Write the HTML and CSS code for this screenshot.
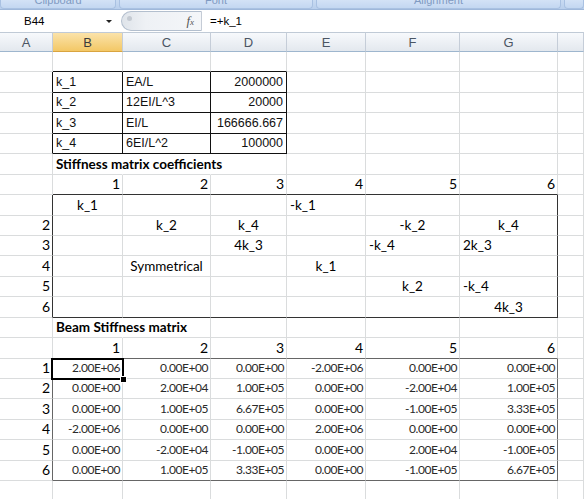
FILE: index.html
```html
<!DOCTYPE html>
<html lang="en">
<head>
    <meta charset="UTF-8">
    <title>Beam Stiffness matrix</title>
    <link rel="stylesheet" href="styles.css">
</head>
<body>
    <div class="ribbon">
        <div class="group g-clip"><span>Clipboard</span></div>
        <div class="group g-font"><span>Font</span></div>
        <div class="group g-align"><span>Alignment</span></div>
        <div class="group g-rest"></div>
    </div>

    <div class="formula-bar">
        <div class="name-box"><span>B44</span><span class="arrow"></span></div>
        <div class="fx-box"><span class="knob"></span><span class="fx">f<small>x</small></span></div>
        <div class="formula">=+k_1</div>
    </div>

    <div class="sheet">
        <!-- column headers -->
        <div class="hd">A</div><div class="hd active">B</div><div class="hd">C</div><div class="hd">D</div>
        <div class="hd">E</div><div class="hd">F</div><div class="hd">G</div><div class="hd"></div>

        <!-- row 0 -->
        <div class="c"></div><div class="c bb"></div><div class="c bb"></div><div class="c bb"></div>
        <div class="c"></div><div class="c"></div><div class="c"></div><div class="c"></div>

        <!-- constants -->
        <div class="c br"></div><div class="c k br bb">k_1</div><div class="c k br bb">EA/L</div><div class="c k r br bb">2000000</div>
        <div class="c"></div><div class="c"></div><div class="c"></div><div class="c"></div>

        <div class="c br"></div><div class="c k br bb">k_2</div><div class="c k br bb">12EI/L^3</div><div class="c k r br bb">20000</div>
        <div class="c"></div><div class="c"></div><div class="c"></div><div class="c"></div>

        <div class="c br"></div><div class="c k br bb">k_3</div><div class="c k br bb">EI/L</div><div class="c k r br bb">166666.667</div>
        <div class="c"></div><div class="c"></div><div class="c"></div><div class="c"></div>

        <div class="c br"></div><div class="c k br bb">k_4</div><div class="c k br bb">6EI/L^2</div><div class="c k r br bb">100000</div>
        <div class="c"></div><div class="c"></div><div class="c"></div><div class="c"></div>

        <!-- stiffness matrix coefficients -->
        <div class="c"></div><div class="c title nr">Stiffness matrix coefficients</div><div class="c nr"></div><div class="c"></div>
        <div class="c"></div><div class="c"></div><div class="c"></div><div class="c"></div>

        <div class="c"></div><div class="c n r sb">1</div><div class="c n r sb">2</div><div class="c n r sb">3</div>
        <div class="c n r sb">4</div><div class="c n r sb">5</div><div class="c n r sb">6</div><div class="c"></div>

        <div class="c sr"></div><div class="c t m">k_1</div><div class="c"></div><div class="c"></div>
        <div class="c t">-k_1</div><div class="c"></div><div class="c sr"></div><div class="c"></div>

        <div class="c n r sr">2</div><div class="c"></div><div class="c t m">k_2</div><div class="c t m">k_4</div>
        <div class="c"></div><div class="c t m">-k_2</div><div class="c t m sr">k_4</div><div class="c"></div>

        <div class="c n r sr">3</div><div class="c"></div><div class="c"></div><div class="c t m">4k_3</div>
        <div class="c"></div><div class="c t">-k_4</div><div class="c t sr">2k_3</div><div class="c"></div>

        <div class="c n r sr">4</div><div class="c"></div><div class="c t m">Symmetrical</div><div class="c"></div>
        <div class="c t m">k_1</div><div class="c"></div><div class="c sr"></div><div class="c"></div>

        <div class="c n r sr">5</div><div class="c"></div><div class="c"></div><div class="c"></div>
        <div class="c"></div><div class="c t m">k_2</div><div class="c t sr">-k_4</div><div class="c"></div>

        <div class="c n r sr">6</div><div class="c sb"></div><div class="c sb"></div><div class="c sb"></div>
        <div class="c sb"></div><div class="c sb"></div><div class="c t m sr sb">4k_3</div><div class="c"></div>

        <!-- beam stiffness matrix -->
        <div class="c"></div><div class="c title nr">Beam Stiffness matrix</div><div class="c"></div><div class="c"></div>
        <div class="c"></div><div class="c"></div><div class="c"></div><div class="c"></div>

        <div class="c"></div><div class="c n r gb">1</div><div class="c n r gb">2</div><div class="c n r gb">3</div>
        <div class="c n r gb">4</div><div class="c n r gb">5</div><div class="c n r gb">6</div><div class="c"></div>

        <div class="c n r gr">1</div><div class="c v r sel">2.00E+06</div><div class="c v r">0.00E+00</div><div class="c v r">0.00E+00</div>
        <div class="c v r">-2.00E+06</div><div class="c v r">0.00E+00</div><div class="c v r gr">0.00E+00</div><div class="c"></div>

        <div class="c n r gr">2</div><div class="c v r">0.00E+00</div><div class="c v r">2.00E+04</div><div class="c v r">1.00E+05</div>
        <div class="c v r">0.00E+00</div><div class="c v r">-2.00E+04</div><div class="c v r gr">1.00E+05</div><div class="c"></div>

        <div class="c n r gr">3</div><div class="c v r">0.00E+00</div><div class="c v r">1.00E+05</div><div class="c v r">6.67E+05</div>
        <div class="c v r">0.00E+00</div><div class="c v r">-1.00E+05</div><div class="c v r gr">3.33E+05</div><div class="c"></div>

        <div class="c n r gr">4</div><div class="c v r">-2.00E+06</div><div class="c v r">0.00E+00</div><div class="c v r">0.00E+00</div>
        <div class="c v r">2.00E+06</div><div class="c v r">0.00E+00</div><div class="c v r gr">0.00E+00</div><div class="c"></div>

        <div class="c n r gr">5</div><div class="c v r">0.00E+00</div><div class="c v r">-2.00E+04</div><div class="c v r">-1.00E+05</div>
        <div class="c v r">0.00E+00</div><div class="c v r">2.00E+04</div><div class="c v r gr">-1.00E+05</div><div class="c"></div>

        <div class="c n r gr">6</div><div class="c v r gb">0.00E+00</div><div class="c v r gb">1.00E+05</div><div class="c v r gb">3.33E+05</div>
        <div class="c v r gb">0.00E+00</div><div class="c v r gb">-1.00E+05</div><div class="c v r gr gb">6.67E+05</div><div class="c"></div>

        <!-- trailing empty row -->
        <div class="c"></div><div class="c"></div><div class="c"></div><div class="c"></div>
        <div class="c"></div><div class="c"></div><div class="c"></div><div class="c"></div>
    </div>
</body>
</html>
```

FILE: styles.css
```css
body {
    margin: 0;
    background-color: #fff;
    font-family: 'Liberation Sans', Arial, sans-serif;
    color: #000;
    overflow: hidden;
}

/* ribbon remnant */
.ribbon {
    height: 9px;
    display: flex;
    gap: 3px;
    background: linear-gradient(#c9dbf2, #b9cfec);
    border-bottom: 1px solid #9fb8da;
    overflow: hidden;
}
.group {
    height: 8px;
    background: linear-gradient(#d3e2f6, #c3d7f1);
    border: 1px solid #a9c1e2;
    border-top: none;
    border-radius: 0 0 4px 4px;
    overflow: hidden;
    text-align: center;
    font-size: 11px;
    color: #7f9ac2;
}
.group span {
    display: block;
    line-height: 12px;
    margin-top: -6px;
}
.g-clip { width: 114px; }
.g-font { width: 192px; }
.g-align { width: 243px; }
.g-rest { flex: 1; }

/* formula bar */
.formula-bar {
    height: 22px;
    display: flex;
    align-items: center;
    background-color: #fff;
    font-size: 11.5px;
}
.name-box {
    width: 118px;
    display: flex;
    align-items: center;
    padding-left: 24px;
    box-sizing: border-box;
}
.name-box .arrow {
    margin-left: auto;
    margin-right: 6px;
    width: 0;
    height: 0;
    border-left: 3px solid transparent;
    border-right: 3px solid transparent;
    border-top: 3px solid #222;
}
.fx-box {
    width: 81px;
    height: 20px;
    margin-left: 3px;
    display: flex;
    align-items: center;
    box-sizing: border-box;
    border: 1px solid #b3bfce;
    border-right-color: #c5ccd6;
    border-radius: 10px 0 0 10px;
    background: linear-gradient(90deg, #dfe4ea, #eef1f5 30%, #f4f6f9);
}
.knob {
    width: 5px;
    height: 5px;
    margin-left: 5px;
    margin-top: -5px;
    border-radius: 50%;
    background: #c4cad2;
}
.fx {
    margin-left: auto;
    margin-right: 7px;
    font-family: 'Liberation Serif', serif;
    font-style: italic;
    font-size: 13px;
    color: #555;
}
.fx small {
    font-size: 9px;
}
.formula {
    padding-left: 8px;
}

/* worksheet */
.sheet {
    display: grid;
    grid-template-columns: 53px 70px 88px 76px 79px 94px 98px 1fr;
    grid-template-rows: 20px repeat(22, 20.45px);
    font-family: Lato, 'Liberation Sans', sans-serif;
    font-size: 13.5px;
}
.hd {
    display: flex;
    align-items: center;
    justify-content: center;
    background: linear-gradient(#f7f9fc, #e3e8ee);
    border-top: 1px solid #c0cad6;
    border-right: 1px solid #c5cdd8;
    border-bottom: 1px solid #9eb6ce;
    box-sizing: border-box;
    font-family: 'Liberation Sans', Arial, sans-serif;
    font-size: 13px;
    color: #4b5563;
}
.hd.active {
    background: linear-gradient(#fbe3aa, #f3c866);
    border-bottom-color: #d9a440;
    color: #3b3b3b;
}
.c {
    display: flex;
    align-items: flex-end;
    padding: 0 3px 2px;
    box-sizing: border-box;
    border-right: 1px solid #dadcdd;
    border-bottom: 1px solid #dadcdd;
    white-space: nowrap;
    line-height: 16px;
    min-width: 0;
}
.r { justify-content: flex-end; padding-right: 2px; }
.m { justify-content: center; }

.k {
    font-family: 'Liberation Sans', Arial, sans-serif;
    font-size: 12.5px;
    color: #111;
}
.k.r { padding-right: 3px; }
.title {
    font-weight: bold;
    overflow: visible;
}
.n { font-size: 14px; }
.t { font-size: 13.5px; }
.v {
    font-size: 12px;
    letter-spacing: -0.45px;
    color: #2a2a2a;
}

/* borders */
.nr { border-right-color: transparent; }
.bb { border-bottom-color: #111; }
.br { border-right-color: #111; }
.sb { border-bottom-color: #333; }
.sr { border-right-color: #333; }
.gb { border-bottom-color: #666; }
.gr { border-right-color: #666; }

/* active cell */
.sel {
    position: relative;
}
.sel::after {
    content: '';
    position: absolute;
    left: -2px;
    top: -1px;
    right: -2px;
    bottom: -2px;
    border: 2px solid #000;
    z-index: 1;
}
.sel::before {
    content: '';
    position: absolute;
    right: -5px;
    bottom: -5px;
    width: 5px;
    height: 5px;
    background: #000;
    border: 1px solid #fff;
    z-index: 2;
}
```
